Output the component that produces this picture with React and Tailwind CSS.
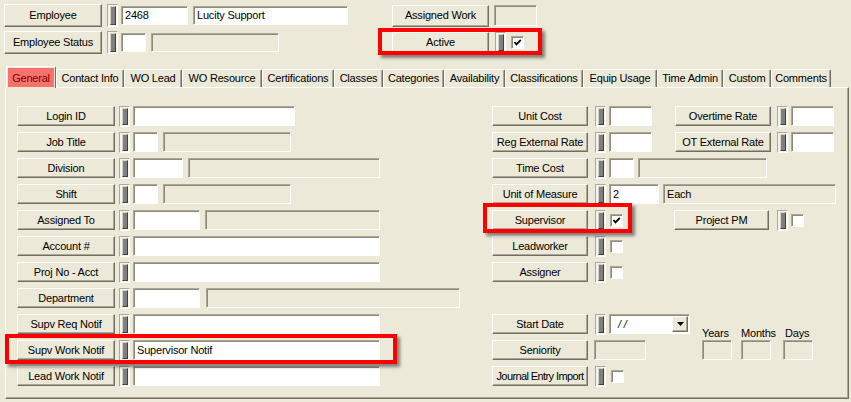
const raised =
  'border border-t-white border-l-white border-r-[#716F64] border-b-[#716F64] shadow-[inset_-1px_-1px_0_#ACA899]';
const sunken =
  'border border-t-[#ACA899] border-l-[#ACA899] border-r-white border-b-white shadow-[inset_1px_1px_0_#8D8A7C]';

function Btn({ w, h = 'h-[20px]', className = '', children }) {
  return (
    <div
      className={`${w} ${h} ${className} ${raised} shrink-0 flex items-center justify-center bg-[#ECE9D8] text-[11px] leading-none text-black whitespace-nowrap`}
    >
      {children}
    </div>
  );
}

function Grip({ h = 'h-[21px]', className = '' }) {
  return (
    <div
      className={`w-[11px] ${h} ${className} shrink-0 p-[1px] border border-t-[#ACA899] border-l-[#ACA899] border-r-white border-b-white bg-[#F4F3EE]`}
    >
      <div className="w-[6px] h-full mx-auto border border-t-[#D6D3C7] border-l-[#D6D3C7] border-r-[#404040] border-b-[#404040] bg-[#7F7F7F]" />
    </div>
  );
}

function Field({ w, h = 'h-[20px]', dis, className = '', children }) {
  return (
    <div
      className={`${w} ${h} ${className} ${sunken} ${dis ? 'bg-[#ECE9D8]' : 'bg-white'} shrink-0 flex items-center pl-[3px] text-[11px] leading-none text-black whitespace-nowrap overflow-hidden`}
    >
      {children}
    </div>
  );
}

function Check({ checked, className = '' }) {
  return (
    <div className={`w-[13px] h-[13px] ${className} ${sunken} shrink-0 bg-white flex items-center justify-center`}>
      {checked && (
        <svg width="9" height="9" viewBox="0 0 9 9">
          <path d="M1.5 4 L3.5 6.3 L7.8 1.8" fill="none" stroke="black" strokeWidth="1.8" />
        </svg>
      )}
    </div>
  );
}

function LRow({ label, children }) {
  return (
    <div className="flex items-center h-[20px]">
      <Btn w="w-[98px]">{label}</Btn>
      <Grip className="ml-[4px]" />
      <div className="ml-[3px] flex items-center">{children}</div>
    </div>
  );
}

function RRow({ label, btnClass = '', children, grip = true }) {
  return (
    <div className="flex items-center h-[20px]">
      <Btn w="w-[96px]" className={btnClass}>{label}</Btn>
      {grip && <Grip className="ml-[7px]" />}
      <div className={`${grip ? 'ml-[3px]' : 'ml-[6px]'} flex items-center`}>{children}</div>
    </div>
  );
}

const tabs = [
  ['General', 'w-[50px]'],
  ['Contact Info', 'w-[68px]'],
  ['WO Lead', 'w-[58px]'],
  ['WO Resource', 'w-[80px]'],
  ['Certifications', 'w-[72px]'],
  ['Classes', 'w-[49px]'],
  ['Categories', 'w-[61px]'],
  ['Availability', 'w-[61px]'],
  ['Classifications', 'w-[78px]'],
  ['Equip Usage', 'w-[74px]'],
  ['Time Admin', 'w-[66px]'],
  ['Custom', 'w-[48px]'],
  ['Comments', 'w-[60px]'],
];

export default function App() {
  return (
    <div className="relative w-[851px] h-[402px] overflow-hidden bg-[#ECE9D8] font-['Liberation_Sans',Arial,sans-serif] tracking-[-0.2px] text-black">
      {/* Header fields */}
      <div className="pt-[4px] pl-[4px]">
        <div className="flex items-center h-[23px]">
          <Btn w="w-[98px]" h="h-[23px]">Employee</Btn>
          <Grip h="h-[23px]" className="ml-[5px]" />
          <Field w="w-[67px]" h="h-[19px]" className="ml-[3px]">2468</Field>
          <Field w="w-[155px]" h="h-[19px]" className="ml-[5px]">Lucity Support</Field>
          <Btn w="w-[97px]" h="h-[22px]" className="ml-[44px]">Assigned Work</Btn>
          <Field dis w="w-[43px]" h="h-[21px]" className="ml-[5px]" />
        </div>
        <div className="flex items-center h-[23px] mt-[4px]">
          <Btn w="w-[98px]" h="h-[23px]">Employee Status</Btn>
          <Grip h="h-[23px]" className="ml-[5px]" />
          <Field w="w-[25px]" h="h-[19px]" className="ml-[3px]" />
          <Field dis w="w-[128px]" h="h-[19px]" className="ml-[5px]" />
          <Btn w="w-[97px]" h="h-[22px]" className="ml-[113px]">Active</Btn>
          <Grip className="ml-[6px]" />
          <Check checked className="ml-[5px]" />
        </div>
      </div>

      {/* Tabs */}
      <div className="mt-[12px] pl-[6px] flex items-end h-[21px]">
        {tabs.map(([t, w], i) =>
          i === 0 ? (
            <div
              key={t}
              className={`${w} h-[22px] -mb-[1px] relative z-10 p-[1px] rounded-t-[2px] border border-b-0 border-t-white border-l-white border-r-[#716F64] bg-[#ECE9D8]`}
            >
              <div className="h-full bg-[#F6736D] text-[#7A0000] text-[11px] flex items-start justify-center pt-[2px]">
                {t}
              </div>
            </div>
          ) : (
            <div
              key={t}
              className={`${w} h-[18px] rounded-t-[2px] border border-b-0 border-t-white border-l-white border-r-[#716F64] shadow-[inset_-1px_0_0_#ACA899] flex items-center justify-center text-[11px] leading-none whitespace-nowrap`}
            >
              {t}
            </div>
          )
        )}
      </div>

      {/* Panel */}
      <div className={`ml-[5px] w-[844px] h-[312px] ${raised} pt-[18px] pl-[11px] flex`}>
        <div className="w-[475px] shrink-0 flex flex-col gap-[6px]">
          <LRow label="Login ID"><Field w="w-[162px]" /></LRow>
          <LRow label="Job Title">
            <Field w="w-[25px]" />
            <Field dis w="w-[128px]" className="ml-[5px]" />
          </LRow>
          <LRow label="Division">
            <Field w="w-[50px]" />
            <Field dis w="w-[192px]" className="ml-[5px]" />
          </LRow>
          <LRow label="Shift">
            <Field w="w-[25px]" />
            <Field dis w="w-[128px]" className="ml-[5px]" />
          </LRow>
          <LRow label="Assigned To">
            <Field w="w-[67px]" />
            <Field dis w="w-[175px]" className="ml-[5px]" />
          </LRow>
          <LRow label="Account #"><Field w="w-[247px]" /></LRow>
          <LRow label="Proj No - Acct"><Field w="w-[247px]" /></LRow>
          <LRow label="Department">
            <Field w="w-[67px]" />
            <Field dis w="w-[254px]" className="ml-[6px]" />
          </LRow>
          <LRow label="Supv Req Notif"><Field w="w-[247px]" /></LRow>
          <LRow label="Supv Work Notif"><Field w="w-[247px]">Supervisor Notif</Field></LRow>
          <LRow label="Lead Work Notif"><Field w="w-[247px]" /></LRow>
        </div>

        <div className="flex flex-col gap-[6px]">
          <RRow label="Unit Cost">
            <Field w="w-[43px]" />
            <Btn w="w-[96px]" className="ml-[23px]">Overtime Rate</Btn>
            <Grip className="ml-[6px]" />
            <Field w="w-[43px]" className="ml-[3px]" />
          </RRow>
          <RRow label="Reg External Rate">
            <Field w="w-[43px]" />
            <Btn w="w-[96px]" className="ml-[23px]">OT External Rate</Btn>
            <Grip className="ml-[6px]" />
            <Field w="w-[43px]" className="ml-[3px]" />
          </RRow>
          <RRow label="Time Cost">
            <Field w="w-[25px]" />
            <Field dis w="w-[129px]" className="ml-[4px]" />
          </RRow>
          <RRow label="Unit of Measure">
            <Field w="w-[50px]">2</Field>
            <Field dis w="w-[173px]" className="ml-[4px]">Each</Field>
          </RRow>
          <RRow label="Supervisor">
            <Check checked className="ml-[1px]" />
            <Btn w="w-[95px]" className="ml-[51px]">Project PM</Btn>
            <Grip className="ml-[8px]" />
            <Check className="ml-[3px]" />
          </RRow>
          <RRow label="Leadworker"><Check className="ml-[1px]" /></RRow>
          <RRow label="Assigner"><Check className="ml-[1px]" /></RRow>
          <div className="h-[20px]" />
          <div className="flex">
            <div className="flex flex-col gap-[6px]">
              <RRow label="Start Date">
                <div className={`w-[81px] h-[20px] ${sunken} bg-white flex items-center justify-between pr-[1px]`}>
                  <span className="pl-[8px] text-[11px] italic leading-none">/ /</span>
                  <div className={`w-[16px] h-[16px] ${raised} bg-[#ECE9D8] flex items-center justify-center`}>
                    <svg width="7" height="4" viewBox="0 0 7 4">
                      <path d="M0 0 H7 L3.5 4 Z" fill="black" />
                    </svg>
                  </div>
                </div>
              </RRow>
              <RRow label="Seniority" grip={false}>
                <Field dis w="w-[52px]" />
              </RRow>
              <RRow label="Journal Entry Import" btnClass="tracking-[-0.6px]">
                <Check className="ml-[2px]" />
              </RRow>
            </div>
            <div className="ml-[12px] mt-[12px] flex items-start text-[11px]">
              <div className="w-[30px] flex flex-col">
                <span className="h-[14px] leading-[14px] whitespace-nowrap">Years</span>
                <Field dis w="w-[30px]" />
              </div>
              <div className="w-[30px] flex flex-col ml-[9px]">
                <span className="h-[14px] leading-[14px] whitespace-nowrap">Months</span>
                <Field dis w="w-[30px]" />
              </div>
              <div className="w-[30px] flex flex-col ml-[12px]">
                <span className="h-[14px] leading-[14px] pl-[2px] whitespace-nowrap">Days</span>
                <Field dis w="w-[30px]" />
              </div>
            </div>
          </div>
        </div>
      </div>

      {/* Red highlight boxes */}
      <div className="absolute left-[378px] top-[28px] w-[164px] h-[27px] border-[4px] border-[#FF0000] shadow-[3px_3px_3px_rgba(0,0,0,0.45)]" />
      <div className="absolute left-[483px] top-[203px] w-[149px] h-[30px] border-[4px] border-[#FF0000] shadow-[3px_3px_3px_rgba(0,0,0,0.45)]" />
      <div className="absolute left-[5px] top-[334px] w-[392px] h-[30px] border-[4px] border-[#FF0000] shadow-[3px_3px_3px_rgba(0,0,0,0.45)]" />
    </div>
  );
}
